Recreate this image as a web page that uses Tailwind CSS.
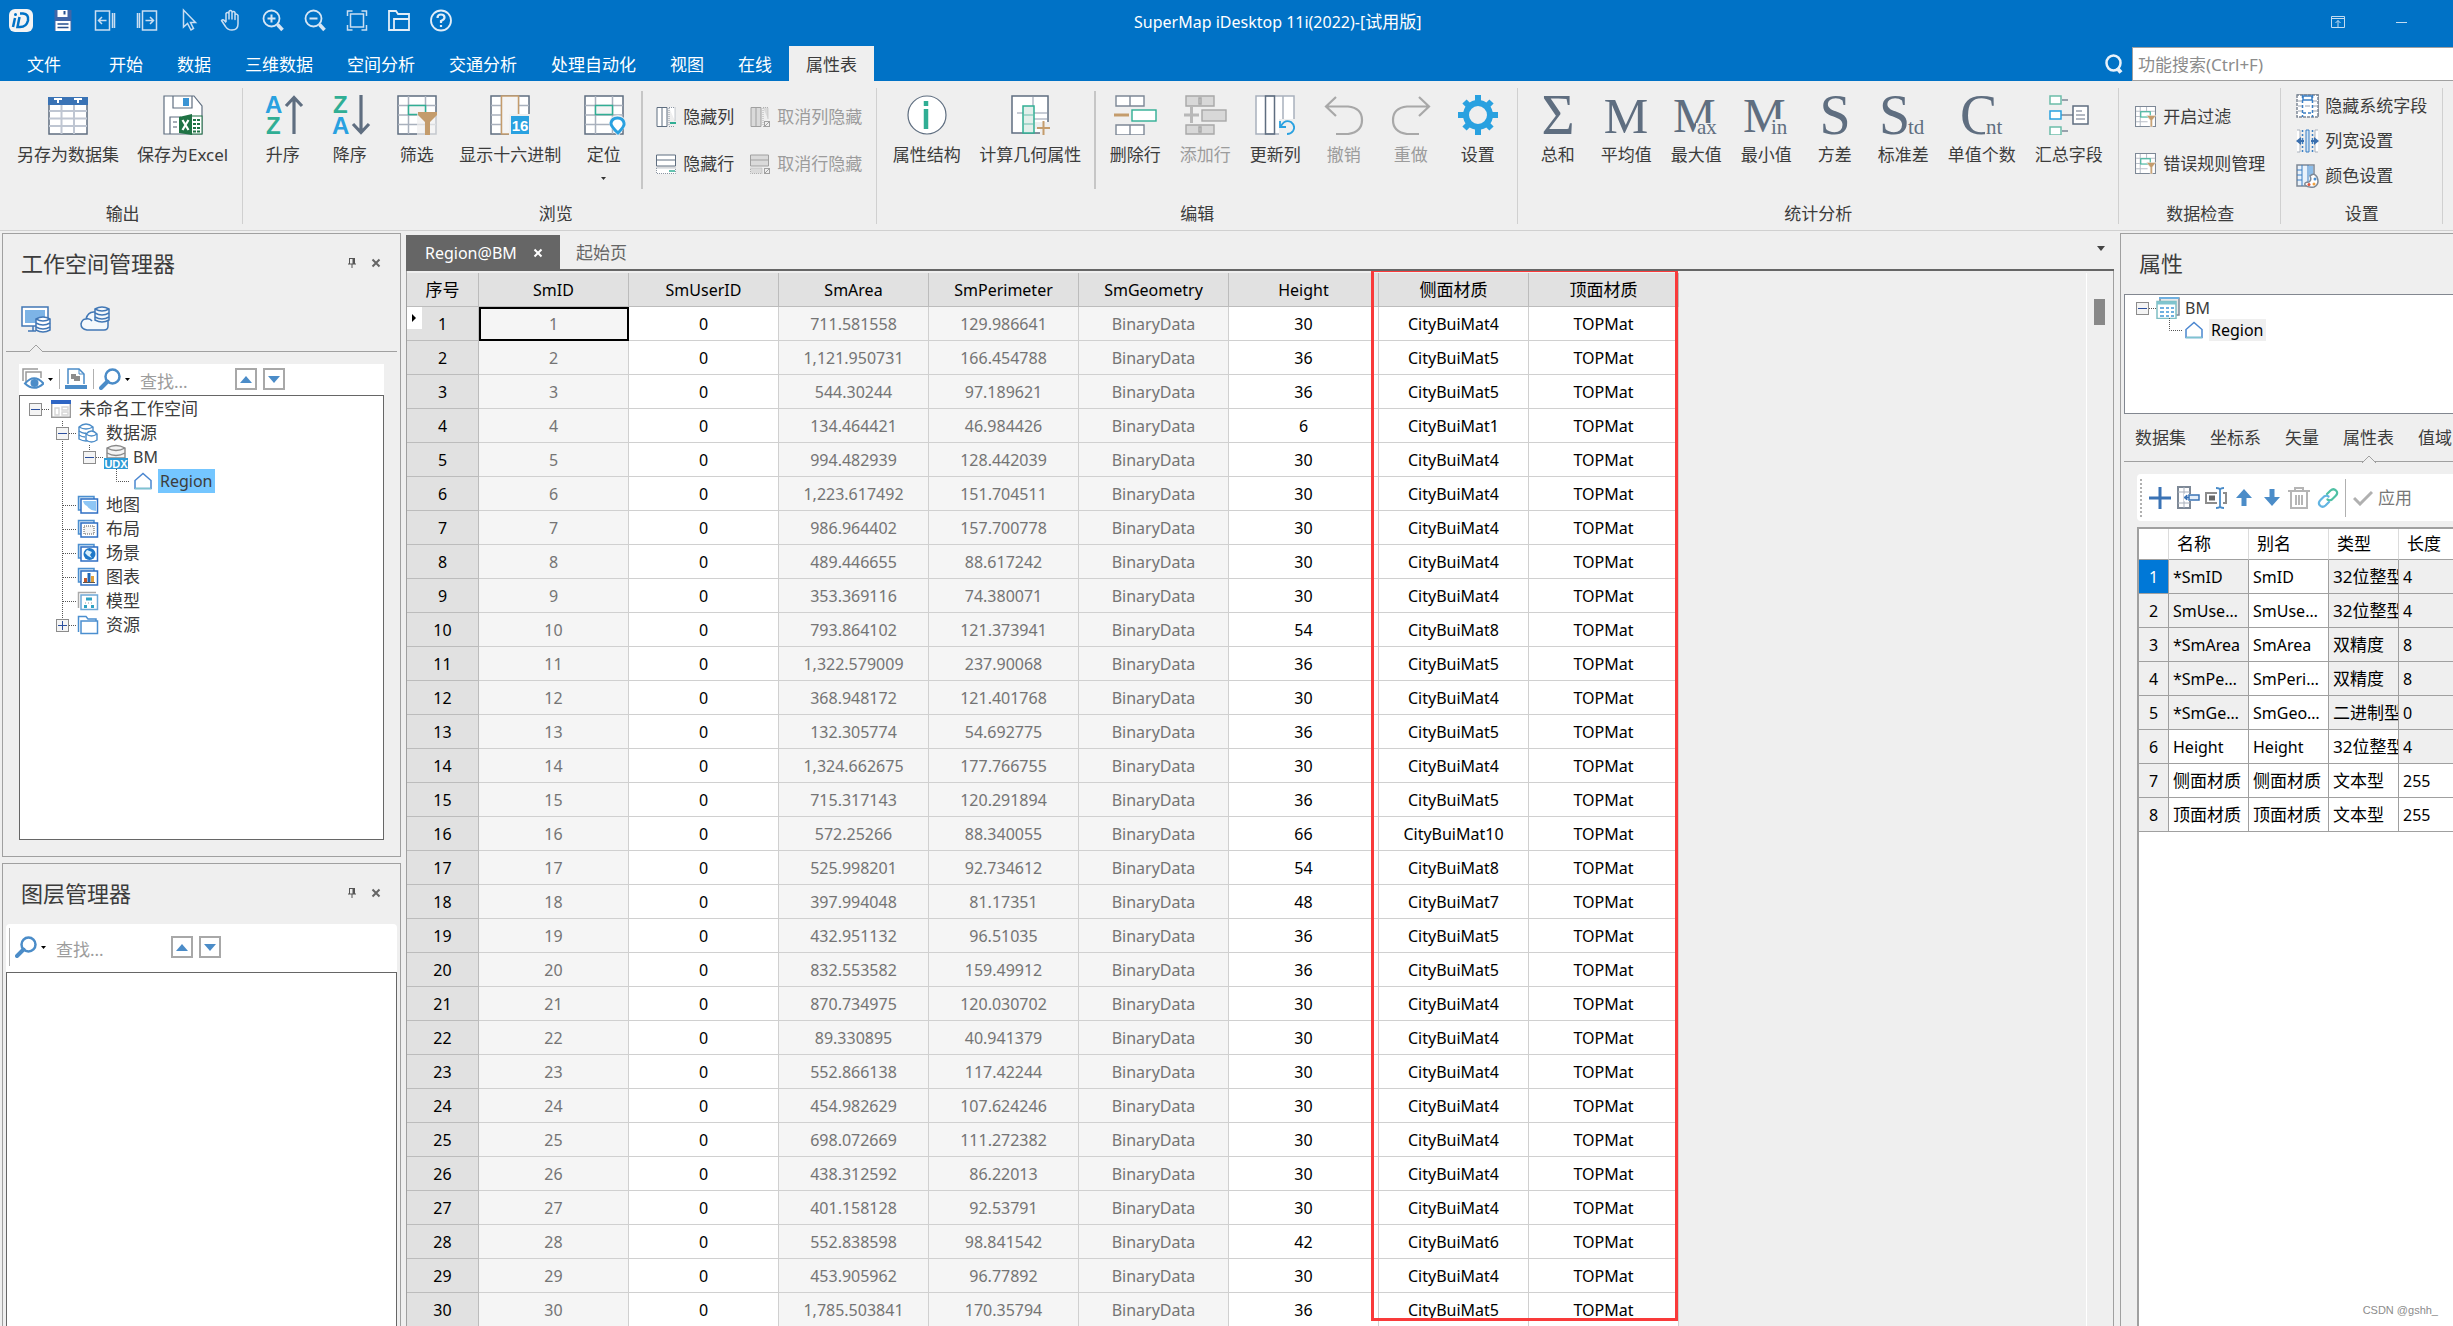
<!DOCTYPE html>
<html lang="zh-CN">
<head>
  <meta charset="UTF-8" />
  <meta name="viewport" content="width=device-width, initial-scale=1" />
  <title>SuperMap iDesktop 11i(2022)-[试用版]</title>
  <script src="https://cdn.jsdelivr.net/npm/@tailwindcss/browser@4"></script>
</head>
<body class="h-screen flex flex-col overflow-hidden bg-[#efefef] text-[17px] leading-5 text-[#3c3c3c] font-['Noto_Sans','Noto_Sans_CJK_SC',sans-serif]">

  <!-- Shared symbols -->
  <svg class="hidden">
    <symbol id="grid-base" viewBox="0 0 40 40">
      <rect x="1" y="1" width="38" height="38" fill="#fff" stroke="#5f6e80" stroke-width="1.5" />
      <path d="M11.500 1V39M28.500 1V39M1 10.500H39M1 20H39M1 29.500H39" stroke="#a9b1bd" stroke-width="1.500" fill="none" />
    </symbol>
    <symbol id="filter-grid" viewBox="0 0 20 20">
      <path d="M.5.500H19.500V19.500H.5z" fill="#fff" stroke="#7d8896" />
      <path d="M5 1V19M1 5H19M1 10H19M1 15H12M11 1V5" stroke="#b9bfc8" fill="none" />
      <rect x="5.500" y="5.500" width="9" height="5" fill="#fff" stroke="#30ae94" />
      <path d="M11 9H20L16.500 13.500V20H14.500V13.500z" fill="#c49c6c" stroke="#efefef" stroke-width=".5" />
    </symbol>
    <symbol id="t-minus" viewBox="0 0 27 24">
      <path d="M20 12.500H27" stroke="#555" stroke-dasharray="1 1" />
      <rect x="7.500" y="6.500" width="12" height="12" fill="#f4f4f4" stroke="#8c8c8c" />
      <path d="M9 12.500H18" stroke="#2b4f9e" />
    </symbol>
    <symbol id="t-minus-through" viewBox="0 0 27 24">
      <path d="M13.500 0V24" stroke="#555" stroke-dasharray="1 1" />
      <use href="#t-minus" width="27" height="24" />
    </symbol>
    <symbol id="t-minus-up" viewBox="0 0 27 24">
      <path d="M13.500 0V6" stroke="#555" stroke-dasharray="1 1" />
      <use href="#t-minus" width="27" height="24" />
    </symbol>
    <symbol id="t-plus-up" viewBox="0 0 27 24">
      <use href="#t-minus-up" width="27" height="24" />
      <path d="M13.500 8V17" stroke="#2b4f9e" />
    </symbol>
    <symbol id="t-line" viewBox="0 0 27 24">
      <path d="M13.500 0V24" stroke="#555" stroke-dasharray="1 1" />
    </symbol>
    <symbol id="t-tee" viewBox="0 0 27 24">
      <path d="M13.500 0V24M14 12.500H27" stroke="#555" stroke-dasharray="1 1" />
    </symbol>
    <symbol id="t-corner" viewBox="0 0 27 24">
      <path d="M13.500 0V12.500H27" stroke="#555" stroke-dasharray="1 1" fill="none" />
    </symbol>
    <symbol id="region" viewBox="0 0 18 18">
      <path d="M1 16.500V8.500L9 1.500L17 8.500V16.500z" fill="#fff" stroke="#4a86d0" stroke-width="1.500" />
      <path d="M1 16.500H17" stroke="#7fc4cf" stroke-width="1.500" />
    </symbol>
    <symbol id="stack" viewBox="0 0 22 20">
      <path d="M4 15H1.500V1.500H17V4" fill="#cfe3f5" stroke="#4b8fd0" stroke-width="1.500" />
      <rect x="4" y="4" width="16.500" height="14" fill="#fff" stroke="#2f6fc4" stroke-width="1.500" />
    </symbol>
    <symbol id="loupe" viewBox="0 0 22 22">
      <circle cx="13.500" cy="8.500" r="7" fill="none" stroke="#4b8cc8" stroke-width="2.500" />
      <path d="M8.500 13.500L2 20" stroke="#4b8cc8" stroke-width="4" stroke-linecap="round" />
    </symbol>
    <symbol id="pin" viewBox="0 0 8 10">
      <path d="M1.500.500V6M0 6H8M4 6V10M1 .500H6" stroke="#555" fill="none" />
      <path d="M4.500 0H7V6H4.500z" fill="#555" />
    </symbol>
    <symbol id="cross" viewBox="0 0 10 10">
      <path d="M1.500 1.500L8.500 8.500M8.500 1.500L1.500 8.500" stroke="currentColor" stroke-width="2" fill="none" />
    </symbol>
  </svg>

  <!-- Title bar and ribbon tabs -->
  <header class="shrink-0 bg-[#0072c6] text-white">
    <div class="h-[46px] relative flex items-start">
      <div class="flex items-center pl-2 pt-2 gap-4">
        <button class="w-[26px] h-[25px]" aria-label="iDesktop"><svg viewBox="0 0 26 25" class="w-full h-full" fill="none"><rect x="1" y="1" width="24" height="23" rx="6" fill="#f4f4f4" /><path d="M12 5.500H15Q21 6 20 12.500Q18.500 19 12 19H9.500L11.500 9" stroke="#0072c6" stroke-width="2.500" /><path d="M7 10L5 19" stroke="#0072c6" stroke-width="2.500" /><circle cx="7.500" cy="6.500" r="1.500" fill="#0072c6" /></svg></button>
        <button class="w-[26px] h-[25px]" aria-label="保存"><svg viewBox="0 0 25 25" class="w-full h-full"><path d="M4 2H21V23H4z" fill="#3f66a8" /><path d="M7 2H17V9H7zM5 13H20V23H5z" fill="#fff" /><path d="M13 3H15V6.500H13z" fill="#27508f" /><path d="M7 16H18M7 19.500H18" stroke="#27508f" stroke-width="1.500" /></svg></button>
        <button class="w-[26px] h-[25px]" aria-label="后退"><svg viewBox="0 0 25 25" class="w-full h-full" fill="none" stroke="#c9def2" stroke-width="1.500"><path d="M3 3H17V22H3zM20 5V20M22 5V20M14 12.500H6M9.500 9L6 12.500L9.500 16" /></svg></button>
        <button class="w-[26px] h-[25px]" aria-label="前进"><svg viewBox="0 0 25 25" class="w-full h-full" fill="none" stroke="#c9def2" stroke-width="1.500"><path d="M8 3H22V22H8zM5 5V20M3 5V20M11 12.500H19M15.500 9L19 12.500L15.500 16" /></svg></button>
        <button class="w-[26px] h-[25px]" aria-label="选择"><svg viewBox="0 0 25 25" class="w-full h-full" fill="none" stroke="#c9def2" stroke-width="1.500"><path d="M7 2V19L11 15.500L14.500 22L17 20.500L14 14.500H19z" /></svg></button>
        <button class="w-[26px] h-[25px]" aria-label="平移"><svg viewBox="0 0 26 25" class="w-full h-full" fill="none" stroke="#c9def2" stroke-width="1.500" stroke-linejoin="round"><path d="M8 14V5.500Q9.500 3.500 11 5.500V11V3.500Q12.500 1.500 14 3.500V11V4.500Q15.500 2.500 17 4.500V11.500V7Q18.500 5 20 7.500V16Q20 22 14 22Q9.500 22 7.500 18.500L3.500 12.500Q5.500 10.500 8 14.500" /></svg></button>
        <button class="w-[26px] h-[25px]" aria-label="放大"><svg viewBox="0 0 25 25" class="w-full h-full" fill="none" stroke="#d6e6f5"><circle cx="11" cy="10.500" r="8" stroke-width="1.800" /><path d="M7 10.500H15M11 6.500V14.500" stroke-width="2" /><path d="M17 16.500L22 22" stroke-width="3.500" /></svg></button>
        <button class="w-[26px] h-[25px]" aria-label="缩小"><svg viewBox="0 0 25 25" class="w-full h-full" fill="none" stroke="#d6e6f5"><circle cx="11" cy="10.500" r="8" stroke-width="1.800" /><path d="M7 10.500H15" stroke-width="2" /><path d="M17 16.500L22 22" stroke-width="3.500" /></svg></button>
        <button class="w-[26px] h-[25px]" aria-label="全幅显示"><svg viewBox="0 0 25 25" class="w-full h-full" fill="none" stroke="#c9def2" stroke-width="1.500"><path d="M6 6H19V19H6zM3 8V3H8M17 3H22V8M22 17V22H17M8 22H3V17" /></svg></button>
        <button class="w-[26px] h-[25px]" aria-label="打开"><svg viewBox="0 0 26 25" class="w-full h-full" fill="none" stroke="#e2eef8" stroke-width="1.800"><path d="M3 22V3H10L12 6H23V22zM8 22V11H23" /></svg></button>
        <button class="w-[26px] h-[25px]" aria-label="帮助"><svg viewBox="0 0 25 25" class="w-full h-full" fill="none" stroke="#e2eef8" stroke-width="1.800"><circle cx="12.500" cy="12.500" r="10" /><path d="M9 10Q9 6.500 12.500 6.500T16 9.500Q16 11.500 12.500 13V15M12.500 17V19" stroke-width="2.200" /></svg></button>
      </div>
      <h1 class="absolute left-[1134px] top-3 text-base leading-5 whitespace-nowrap">SuperMap iDesktop 11i(2022)-[<span class="text-[17px]">试用版</span>]</h1>
      <div class="ml-auto flex pr-[46px] pt-[15px] gap-[51px]">
        <button aria-label="功能区显示选项"><svg class="w-[14px] h-[14px]" viewBox="0 0 14 14" fill="none" stroke="#c3dcf1"><path d="M.5 1.500H13.500V12.500H.5zM.5 3.500H13.500M7 12V5.500M4.500 8L7 5.500L9.500 8" /></svg></button>
        <button aria-label="最小化"><svg class="w-[11px] h-[14px]" viewBox="0 0 11 14"><path d="M0 7.500H11" stroke="#c3dcf1" /></svg></button>
      </div>
    </div>
    <div class="h-[35px] flex items-stretch">
      <nav class="flex items-stretch">
        <button class="w-[88px] mr-1 pt-[2px]">文件</button>
        <button class="px-[17px] pt-[2px]">开始</button>
        <button class="px-[17px] pt-[2px]">数据</button>
        <button class="px-[17px] pt-[2px]">三维数据</button>
        <button class="px-[17px] pt-[2px]">空间分析</button>
        <button class="px-[17px] pt-[2px]">交通分析</button>
        <button class="px-[17px] pt-[2px]">处理自动化</button>
        <button class="px-[17px] pt-[2px]">视图</button>
        <button class="px-[17px] pt-[2px]">在线</button>
        <button class="px-[17px] pt-[2px] bg-[#efefef] text-[#3c3c3c]">属性表</button>
      </nav>
      <label for="fn-search" class="ml-auto flex items-center pr-[9px]" aria-label="功能搜索">
        <svg class="w-[18px] h-5" viewBox="0 0 18 20" fill="none" stroke="#e9f2fa"><ellipse cx="8.500" cy="9" rx="7" ry="7.500" stroke-width="2.500" /><path d="M12 14L16 18.500" stroke-width="4" /></svg>
      </label>
      <input id="fn-search" type="text" placeholder="功能搜索(Ctrl+F)" class="w-[321px] h-[34px] mt-px pl-[5px] bg-white border border-r-0 border-[#a0a0a0] text-[#3c3c3c] placeholder:text-[#8c8c8c] outline-none" />
    </div>
  </header>

  <!-- Ribbon -->
  <section class="shrink-0 h-[150px] flex pt-[7px] pb-[6px] border-b border-[#d0d0d0] overflow-hidden whitespace-nowrap">
    <div class="flex flex-col shrink-0 pl-2 pr-[5px] border-r border-[#d0d0d0]">
      <div class="flex items-start">
        <button class="min-w-[67px] px-[9px] pt-[7px] flex flex-col items-center gap-[10px]"><svg class="w-10 h-10" viewBox="0 0 40 40"><rect x="1" y="3" width="38" height="36" fill="#fff" stroke="#5f6e80" stroke-width="1.500" /><path d="M13.500 9V39M26 9V39M1 16H39M1 23.500H39M1 31H39" stroke="#bfc6d2" stroke-width="2" /><path d="M0 2H40V10H0z" fill="#3a73b5" /><path d="M6 4H14M10 4V8M26 4H34M30 4V8" stroke="#fff" stroke-width="2" /></svg>另存为数据集</button>
        <button class="min-w-[67px] px-[9px] pt-[7px] flex flex-col items-center gap-[10px]"><svg class="w-10 h-10" viewBox="0 0 40 40"><path d="M1 1H31L39 11V39H1z" fill="#fff" stroke="#5f6e80" stroke-width="1.200" /><path d="M10 1V13H29V1M7 39V22H18" stroke="#5f6e80" stroke-width="1.200" fill="none" /><path d="M20 3H26V11H20z" fill="#3a94d4" /><path d="M10 27H14M10 32H14" stroke="#8a93a0" stroke-width="1.500" /><rect x="28" y="21" width="11" height="18" fill="#fff" stroke="#1f7244" /><path d="M30 25H37M30 29H37M30 33H37M30 36.500H37" stroke="#1f7244" stroke-width="2" stroke-dasharray="3 1" /><path d="M16 22L29 19V40L16 38z" fill="#1f7244" /><path d="M19.500 25L25.500 35M25.500 25L19.500 35" stroke="#fff" stroke-width="2.200" /></svg>保存为Excel</button>
      </div>
      <div class="mt-auto text-center">输出</div>
    </div>

    <div class="flex flex-col shrink-0 pl-[6px] pr-[14px] border-r border-[#d0d0d0]">
      <div class="flex items-start">
        <button class="min-w-[67px] px-[9px] pt-[7px] flex flex-col items-center gap-[10px]"><svg class="w-10 h-10 overflow-visible" viewBox="0 0 40 40" font-family="Liberation Sans" font-size="24" font-weight="bold"><text x="2" y="18" fill="#29a1e0">A</text><text x="3" y="39" fill="#30ae94">Z</text><path d="M31 39V3M23 11L31 2.500L39 11" stroke="#5f6e80" stroke-width="3.200" fill="none" /></svg>升序</button>
        <button class="min-w-[67px] px-[9px] pt-[7px] flex flex-col items-center gap-[10px]"><svg class="w-10 h-10 overflow-visible" viewBox="0 0 40 40" font-family="Liberation Sans" font-size="24" font-weight="bold"><text x="3" y="18" fill="#30ae94">Z</text><text x="2" y="39" fill="#29a1e0">A</text><path d="M31 0V37M23 29L31 37.500L39 29" stroke="#5f6e80" stroke-width="3.200" fill="none" /></svg>降序</button>
        <button class="min-w-[67px] px-[9px] pt-[7px] flex flex-col items-center gap-[10px]"><svg class="w-10 h-10" viewBox="0 0 40 40"><use href="#grid-base" /><rect x="11.500" y="10.500" width="17" height="9" fill="#f4f4f4" stroke="#30ae94" stroke-width="1.500" /><path d="M20 17H40V40H20z" fill="#efefef" opacity=".7" /><path d="M21 17H40V20L33 27V40H28V27L21 20z" fill="#c49c6c" /></svg>筛选</button>
        <button class="min-w-[67px] px-[9px] pt-[7px] flex flex-col items-center gap-[10px]"><svg class="w-10 h-10 overflow-visible" viewBox="0 0 40 40"><use href="#grid-base" /><rect x="11.500" y="1" width="17" height="38" fill="#f4f4f4" stroke="#c49c6c" stroke-width="1.500" /><path d="M19 19H40V40H19z" fill="#efefef" /><path d="M21 21H39V39H21z" fill="#29a1e0" /><text x="30" y="36" font-family="Liberation Sans" font-size="15" font-weight="bold" text-anchor="middle" fill="#fff">16</text></svg>显示十六进制</button>
        <button class="min-w-[67px] px-[9px] pt-[7px] flex flex-col items-center gap-[10px]"><svg class="w-10 h-10 overflow-visible" viewBox="0 0 40 40"><use href="#grid-base" /><rect x="11.500" y="10.500" width="17" height="9" fill="#f4f4f4" stroke="#30ae94" stroke-width="1.500" /><path d="M34 42L26 31Q23 21 34 20Q43 21 41.500 31z" fill="#efefef" /><path d="M34 38Q26.500 31 27 28Q28 23 33.500 23T40 28Q41 31 34 38z" fill="#fff" stroke="#29a1e0" stroke-width="3" /></svg>定位<svg class="w-[5px] h-[3px] mt-[2px]" viewBox="0 0 5 3"><path d="M0 0H5L2.500 3z" fill="#333" /></svg></button>
        <div class="w-[2px] h-[98px] mt-[3px] ml-1 bg-[#c6c6c6]"></div>
        <div class="grid grid-cols-[auto_auto] gap-x-4 mt-[5px] ml-[13px]">
          <button class="h-[47px] flex items-center gap-[7px]"><svg class="w-5 h-5" viewBox="0 0 20 20" fill="none"><path d="M1 .500H11V19.500H1z" fill="#fff" stroke="#5f6e80" /><path d="M6 0V20" stroke="#5f6e80" /><path d="M13 .500H19V14M13 19.500H18M13 1V19" fill="#fff" stroke="#8c96a3" stroke-dasharray="1 1" /><path d="M14 16H20" stroke="#30ae94" stroke-width="2" /></svg>隐藏列</button>
          <button class="h-[47px] flex items-center gap-[7px] text-[#9c9c9c]" disabled><svg class="w-5 h-5" viewBox="0 0 20 20" fill="none"><path d="M1 .500H11V19.500H1z" fill="#dadada" stroke="#a0a0a0" /><path d="M6 0V20" stroke="#a0a0a0" /><path d="M13 .500H18V12M13 19.500H14M13 1V19" fill="#dadada" stroke="#b0b0b0" stroke-dasharray="1 1" /><rect x="14.500" y="14.500" width="5" height="5" stroke="#a0a0a0" /><path d="M15 19L19 15" stroke="#a0a0a0" /></svg>取消列隐藏</button>
          <button class="h-[47px] flex items-center gap-[7px]"><svg class="w-5 h-5" viewBox="0 0 20 20" fill="none"><path d="M.5 1H19.500V12H.5z" fill="#fff" stroke="#5f6e80" /><path d="M0 6H20" stroke="#5f6e80" /><path d="M.5 14H19.500V19.500H.5z" fill="#fff" stroke="#8c96a3" stroke-dasharray="1 1" /><path d="M13 17H19" stroke="#30ae94" stroke-width="1.500" /></svg>隐藏行</button>
          <button class="h-[47px] flex items-center gap-[7px] text-[#9c9c9c]" disabled><svg class="w-5 h-5" viewBox="0 0 20 20" fill="none"><path d="M.5 1H18.500V12H.5z" fill="#dadada" stroke="#a0a0a0" /><path d="M0 6H19" stroke="#a0a0a0" /><path d="M.5 14H12V19.500H.5z" fill="#dadada" stroke="#b0b0b0" stroke-dasharray="1 1" /><rect x="14.500" y="14.500" width="5" height="5" stroke="#a0a0a0" /><path d="M15 19L19 15" stroke="#a0a0a0" /></svg>取消行隐藏</button>
        </div>
      </div>
      <div class="mt-auto text-center">浏览</div>
    </div>

    <div class="flex flex-col shrink-0 px-[6px] border-r border-[#d0d0d0]">
      <div class="flex items-start">
        <button class="min-w-[87px] px-[9px] pt-[7px] flex flex-col items-center gap-[10px]"><svg class="w-10 h-10" viewBox="0 0 40 40"><circle cx="20" cy="20" r="19" fill="#fff" stroke="#5f6e80" stroke-width="1.200" /><path d="M19 6V11M19 14V34" stroke="#30ae94" stroke-width="4.500" /></svg>属性结构</button>
        <button class="min-w-[67px] px-[9px] pt-[7px] flex flex-col items-center gap-[10px]"><svg class="w-10 h-10" viewBox="0 0 40 40" fill="none"><rect x="2" y="1" width="36" height="37" fill="#fff" stroke="#5f6e80" stroke-width="1.500" /><path d="M23 2V24M7 18H37M24 24H37" stroke="#b5bcc8" stroke-width="1.500" /><rect x="13" y="11" width="11" height="27" fill="#e3efeb" stroke="#30ae94" stroke-width="1.500" /><path d="M14 20H23M14 29H23" stroke="#30ae94" stroke-width=".7" /><path d="M25 27H40V40H30V34H25z" fill="#efefef" /><path d="M27 33H40M33.500 26V40" stroke="#c49c6c" stroke-width="2" /></svg>计算几何属性</button>
        <div class="w-[2px] h-[98px] mt-[3px] mx-1 bg-[#c6c6c6]"></div>
        <button class="min-w-[70px] px-[9px] pt-[7px] flex flex-col items-center gap-[10px]"><svg class="w-11 h-10" viewBox="0 0 44 40" fill="#fff" stroke="#7d8896" stroke-width="1.400"><path d="M3 1H31V11H3zM17 1V11M3 30H31V40H3zM17 30V40" /><rect x="19" y="15" width="24" height="11" stroke="#30ae94" /><path d="M1 20H16" stroke="#c49c6c" stroke-width="3" /></svg>删除行</button>
        <button class="min-w-[70px] px-[9px] pt-[7px] flex flex-col items-center gap-[10px] text-[#9c9c9c]" disabled><svg class="w-11 h-10" viewBox="0 0 44 40" fill="#d8d8d8" stroke="#a8a8a8" stroke-width="1.400"><path d="M3 1H31V11H3zM16 3H18V9H16zM3 30H31V39H3zM16 32H18V37H16z" /><rect x="19" y="15" width="24" height="11" /><path d="M1 20H16M8.500 12V28" stroke="#b8b8b8" stroke-width="3" /></svg>添加行</button>
        <button class="min-w-[70px] px-[9px] pt-[7px] flex flex-col items-center gap-[10px]"><svg class="w-10 h-10" viewBox="0 0 40 40" fill="none"><path d="M1 1H39V39H1z" fill="#fff" stroke="#a9b1bd" stroke-width="1.500" /><path d="M28 1V39" stroke="#a9b1bd" stroke-width="1.500" /><path d="M10.500 1H19.500V39H10.500z" stroke="#5f6e80" stroke-width="1.500" /><path d="M24 24H40V40H24z" fill="#efefef" /><path d="M25 26V32H31M26 31Q30 24 36 27Q41 31 38 36Q36 39 32 39" stroke="#29a1e0" stroke-width="1.800" /></svg>更新列</button>
        <button class="min-w-[67px] px-[9px] pt-[7px] flex flex-col items-center gap-[10px] text-[#9c9c9c]" disabled><svg class="w-10 h-10" viewBox="0 0 40 40" fill="none" stroke="#a8a8a8" stroke-width="2.200"><path d="M12 2L2 11.500L12 21M2 11.500H24Q38 13 38 25T24 39H12" /></svg>撤销</button>
        <button class="min-w-[67px] px-[9px] pt-[7px] flex flex-col items-center gap-[10px] text-[#9c9c9c]" disabled><svg class="w-10 h-10" viewBox="0 0 40 40" fill="none" stroke="#a8a8a8" stroke-width="2.200"><path d="M28 2L38 11.500L28 21M38 11.500H16Q2 13 2 25T16 39H28" /></svg>重做</button>
        <button class="min-w-[67px] px-[9px] pt-[7px] flex flex-col items-center gap-[10px]"><svg class="w-10 h-10" viewBox="0 0 40 40" fill="none" stroke="#29a1e0"><circle cx="20" cy="20" r="12" stroke-width="6" /><path d="M20 0V7M20 33V40M0 20H7M33 20H40M6.500 6.500L11 11M29 29L33.500 33.500M33.500 6.500L29 11M11 29L6.500 33.500" stroke-width="6" /></svg>设置</button>
      </div>
      <div class="mt-auto text-center">编辑</div>
    </div>

    <div class="flex flex-col shrink-0 px-[6px] border-r border-[#d0d0d0]">
      <div class="flex items-start">
        <button class="min-w-[67px] px-[9px] pt-[7px] flex flex-col items-center gap-[10px]"><svg class="w-10 h-10 overflow-visible" viewBox="0 0 40 40" font-family="Liberation Serif" fill="#5f6e80"><text x="20" y="39" font-size="57" text-anchor="middle">Σ</text></svg>总和</button>
        <button class="min-w-[70px] px-[9px] pt-[7px] flex flex-col items-center gap-[10px]"><svg class="w-10 h-10 overflow-visible" viewBox="0 0 40 40" font-family="Liberation Serif" fill="#5f6e80"><text x="20" y="38" font-size="50" text-anchor="middle">M</text></svg>平均值</button>
        <button class="min-w-[70px] px-[9px] pt-[7px] flex flex-col items-center gap-[10px]"><svg class="w-10 h-10 overflow-visible" viewBox="0 0 40 40" font-family="Liberation Serif" fill="#5f6e80"><text x="-3" y="37" font-size="48">M</text><path d="M20 28H42V40H20z" fill="#efefef" /><text x="21" y="39" font-size="21">ax</text></svg>最大值</button>
        <button class="min-w-[70px] px-[9px] pt-[7px] flex flex-col items-center gap-[10px]"><svg class="w-10 h-10 overflow-visible" viewBox="0 0 40 40" font-family="Liberation Serif" fill="#5f6e80"><text x="-3" y="37" font-size="48">M</text><path d="M24 24H42V40H24z" fill="#efefef" /><text x="25" y="39" font-size="21">in</text></svg>最小值</button>
        <button class="min-w-[67px] px-[9px] pt-[7px] flex flex-col items-center gap-[10px]"><svg class="w-10 h-10 overflow-visible" viewBox="0 0 40 40" font-family="Liberation Serif" fill="#5f6e80"><text x="20" y="39" font-size="56" text-anchor="middle">S</text></svg>方差</button>
        <button class="min-w-[70px] px-[9px] pt-[7px] flex flex-col items-center gap-[10px]"><svg class="w-10 h-10 overflow-visible" viewBox="0 0 40 40" font-family="Liberation Serif" fill="#5f6e80"><text x="-4" y="39" font-size="56">S</text><text x="25" y="39" font-size="21">td</text></svg>标准差</button>
        <button class="min-w-[87px] px-[9px] pt-[7px] flex flex-col items-center gap-[10px]"><svg class="w-10 h-10 overflow-visible" viewBox="0 0 40 40" font-family="Liberation Serif" fill="#5f6e80"><text x="-2" y="39" font-size="56">C</text><path d="M23 25H37V41H23z" fill="#efefef" /><text x="24" y="39" font-size="21">nt</text></svg>单值个数</button>
        <button class="min-w-[87px] px-[9px] pt-[7px] flex flex-col items-center gap-[10px]"><svg class="w-10 h-10" viewBox="0 0 40 40" fill="#fff" stroke-width="1.500"><path d="M13 5H19M13 36H19M12 20H24M19 5" stroke="#7d8896" /><path d="M1 1H12V9H1zM1 32H12V40H1z" stroke="#6cbda9" /><path d="M1 16H12V24H1z" stroke="#29a1e0" /><rect x="24" y="11" width="15" height="18" stroke="#5f6e80" /><path d="M27 16H33M27 20H36M27 24H36" stroke="#9aa3b0" /></svg>汇总字段</button>
      </div>
      <div class="mt-auto text-center">统计分析</div>
    </div>

    <div class="flex flex-col shrink-0 pl-4 pr-[15px] border-r border-[#d0d0d0]">
      <div class="flex flex-col items-start mt-[5px]">
        <button class="h-[47px] flex items-center gap-[7px]"><svg class="w-[21px] h-[21px]"><use href="#filter-grid" /></svg>开启过滤</button>
        <button class="h-[47px] flex items-center gap-[7px]"><svg class="w-[21px] h-[21px]"><use href="#filter-grid" /></svg>错误规则管理</button>
      </div>
      <div class="mt-auto text-center">数据检查</div>
    </div>

    <div class="flex flex-col shrink-0 px-[15px] border-r border-[#d0d0d0]">
      <div class="flex flex-col items-start">
        <button class="h-[35px] flex items-center gap-[6px]"><svg class="w-[23px] h-6" viewBox="0 0 23 24" fill="none"><path d="M1 1H22V23" fill="#fff" stroke="#7d8896" stroke-width="1.500" /><path d="M1 1V23H22V1z" fill="#fff" stroke="#7d8896" stroke-width="1.500" stroke-dasharray="3 1" /><path d="M6.500 1V23M16.500 1V23M7 19H16" stroke="#3b7fc4" stroke-width="1.500" stroke-dasharray="3 2" /><path d="M7 2H16V6H7z" stroke="#3b7fc4" stroke-width="1.500" /><path d="M2 7H6M2 12H6M2 17H6M17 7H21M17 12H21M17 17H21M9 12H14" stroke="#9aa3b0" /></svg>隐藏系统字段</button>
        <button class="h-[35px] flex items-center gap-[6px]"><svg class="w-[23px] h-6" viewBox="0 0 23 24" fill="none"><path d="M1 1H4V23H1M22 1H19V23H22" fill="#fff" stroke="#a9b1bd" /><path d="M6.500 1V23M16.500 1V23" stroke="#3b7fc4" stroke-width="1.500" stroke-dasharray="2 2" /><path d="M10 1H13V23H10z" stroke="#3b7fc4" fill="#cfe3f5" /><path d="M0 12L5 8V11H8V13H5V16zM23 12L18 8V11H15V13H18V16z" fill="#3b6fae" /></svg>列宽设置</button>
        <button class="h-[35px] flex items-center gap-[6px]"><svg class="w-[23px] h-6" viewBox="0 0 23 24" fill="none"><path d="M1 1H18V22H1z" fill="#e9f2fb" stroke="#7d8896" stroke-width="1.500" /><path d="M6 1V22M12 1V22M1 6H6M1 11H6M1 16H6" stroke="#3b7fc4" /><path d="M13 2H17V12H13z" fill="#8bbdea" /><path d="M14 12Q18 8 21 13Q24 20 18 23Q12 24 9 21Q8 18 13 18Q16 16 14 12z" fill="#fff" stroke="#7d8896" stroke-width="1.500" /><circle cx="13" cy="20.500" r="1.500" fill="#e2553c" /><circle cx="18" cy="20" r="1.500" fill="#f0a040" /><circle cx="19" cy="15" r="1.500" fill="#4b8fd0" /></svg>颜色设置</button>
      </div>
      <div class="mt-auto text-center">设置</div>
    </div>
  </section>

  <!-- Work area -->
  <main class="flex-1 min-h-0 flex pt-[2px]">

    <!-- Left docks -->
    <aside class="w-[399px] ml-[2px] shrink-0 flex flex-col gap-[6px]">
      <section class="h-[624px] shrink-0 border border-[#a0a0a0] flex flex-col px-[3px]">
        <div class="h-[60px] flex items-center pl-[15px] pr-4 pb-[2px]">
          <h2 class="text-[22px] leading-7">工作空间管理器</h2>
          <button class="ml-auto" aria-label="固定"><svg class="w-2 h-[10px]"><use href="#pin" /></svg></button>
          <button class="ml-[15px]" aria-label="关闭"><svg class="w-[10px] h-[10px] text-[#666]"><use href="#cross" /></svg></button>
        </div>
        <div class="h-[58px] border-b border-[#a0a0a0] flex items-start pl-[15px] pt-3 gap-[29px] relative">
          <button aria-label="本地"><svg class="w-[30px] h-[28px]" viewBox="0 0 30 28" fill="#fff" stroke="#4177b5" stroke-width="1.500"><path d="M1 1H27V20H1z" /><path d="M4 4H24V17H4z" fill="#7db4e6" stroke="none" /><path d="M7 25H15M12 20V25" /><path d="M15 13Q22 9 29 13V24Q22 28 15 24z" /><path d="M15 13Q22 17 29 13M15 17Q22 21 29 17M15 21Q22 25 29 21" fill="none" /></svg></button>
          <button aria-label="在线"><svg class="w-[30px] h-[28px]" viewBox="0 0 30 28" fill="#f4f8fc" stroke="#4177b5" stroke-width="1.500"><path d="M7 24Q1 23 1 18Q2 13 6 13Q8 5 15 6L28 14V20Q28 24 24 24zM6 13Q10 12 12 15" /><path d="M15 3Q22-1 29 3V14Q22 18 15 14z" /><path d="M15 3Q22 7 29 3M15 7Q22 11 29 7M15 11Q22 15 29 11" fill="none" /></svg></button>
          <svg class="absolute left-[23px] -bottom-px w-[14px] h-2" viewBox="0 0 14 8"><path d="M0 8L7 1L14 8" fill="#efefef" stroke="#a0a0a0" /></svg>
        </div>
        <div class="mt-3 mx-[13px] h-[31px] bg-white flex items-center pl-[3px] pb-px">
          <button class="flex items-center gap-1" aria-label="显示"><svg class="w-[22px] h-[22px]" viewBox="0 0 22 22" fill="none"><path d="M1 13V1H16M4 16V4H19V10" stroke="#9a9a9a" stroke-width="1.500" /><path d="M3 15.500Q12 5 21.500 15.500Q12 24 3 15.500z" fill="#fff" stroke="#4b8cc8" stroke-width="2" /><circle cx="12.500" cy="15" r="4" fill="#4b8cc8" /></svg><svg class="w-[5px] h-[3px]" viewBox="0 0 5 3"><path d="M0 0H5L2.500 3z" /></svg></button>
          <span class="w-px h-5 bg-[#b0b0b0] ml-[6px]"></span>
          <button class="ml-[5px]" aria-label="定位"><svg class="w-[22px] h-[22px]" viewBox="0 0 22 22" fill="none"><path d="M3 16V1H14L19 6V16" stroke="#4b8cc8" stroke-width="1.500" /><path d="M14 1V6H19" stroke="#4b8cc8" /><path d="M6 6H11V8H15V13H9V11H6z" fill="#8c8c8c" /><path d="M0 17H22V21H0z" fill="#4b8cc8" /></svg></button>
          <span class="w-px h-5 bg-[#b0b0b0] ml-[6px]"></span>
          <button class="ml-[5px] flex items-center gap-1" aria-label="查找"><svg class="w-[22px] h-[22px]"><use href="#loupe" /></svg><svg class="w-[5px] h-[3px]" viewBox="0 0 5 3"><path d="M0 0H5L2.500 3z" /></svg></button>
          <input type="text" placeholder="查找..." aria-label="查找" class="w-[95px] ml-[10px] pt-[6px] placeholder:text-[#9c9c9c] outline-none" />
          <button class="w-[22px] h-[22px] border-2 border-[#a8a8a8] flex items-center justify-center" aria-label="上一个"><svg class="w-3 h-[7px]" viewBox="0 0 12 7"><path d="M0 7L6 0L12 7z" fill="#4b8cc8" /></svg></button>
          <button class="w-[22px] h-[22px] ml-[6px] border-2 border-[#a8a8a8] flex items-center justify-center" aria-label="下一个"><svg class="w-3 h-[7px]" viewBox="0 0 12 7"><path d="M0 0L6 7L12 0z" fill="#4b8cc8" /></svg></button>
        </div>
        <ul class="mx-[13px] h-[445px] bg-white border border-[#666] pt-px pl-[2px]">
          <li class="h-6 flex items-center"><svg class="w-[27px] h-6"><use href="#t-minus" /></svg><svg class="w-5 h-[18px] mx-[2px]" viewBox="0 0 20 18"><path d="M.7.700H19.300V17.300H.7z" fill="#fff" stroke="#9a9a9a" stroke-width="1.400" /><path d="M0 0H20V4H0z" fill="#2f66c4" /><path d="M4 8H8V15H4zM11 7H17V10H11zM11 12H17V15H11z" fill="none" stroke="#d5d5d5" stroke-width="1.400" /></svg><span class="pl-[6px]">未命名工作空间</span></li>
          <li class="h-6 flex items-center"><span class="w-[27px]"></span><svg class="w-[27px] h-6"><use href="#t-minus-through" /></svg><svg class="w-5 h-5 mx-[2px]" viewBox="0 0 20 20" fill="#fff" stroke="#4b8cc8" stroke-width="1.400"><path d="M1 4Q8-2 15 4V16Q8 20 1 16z" /><path d="M1 4Q8 8 15 4M1 8Q5 11 8 10M1 12Q4 14 7 14" fill="none" /><path d="M8 11Q13.500 5 19 11V17Q13.500 21 8 17z" /><path d="M8 11Q13.500 15 19 11" /></svg><span class="pl-[6px]">数据源</span></li>
          <li class="h-6 flex items-center"><span class="w-[27px]"></span><svg class="w-[27px] h-6"><use href="#t-line" /></svg><svg class="w-[27px] h-6"><use href="#t-minus-up" /></svg><svg class="w-6 h-6 ml-px overflow-visible" viewBox="0 0 24 24"><path d="M3 3Q12-2 21 3V13H3z" fill="#f4f4f4" stroke="#888" stroke-width="1.400" /><path d="M3 3Q12 8 21 3M3 8Q12 13 21 8" fill="none" stroke="#888" stroke-width="1.400" /><path d="M0 13H24V24H0z" fill="#2f9bd6" /><text x="12" y="22.500" font-family="Liberation Sans" font-size="11" font-weight="bold" text-anchor="middle" fill="#fff">UDX</text></svg><span class="pl-[5px] text-base">BM</span></li>
          <li class="h-6 flex items-center"><span class="w-[27px]"></span><svg class="w-[27px] h-6"><use href="#t-line" /></svg><span class="w-[27px]"></span><svg class="w-[27px] h-6"><use href="#t-corner" /></svg><svg class="w-[18px] h-[18px] ml-1"><use href="#region" /></svg><span class="ml-[6px] px-[2px] h-6 leading-6 bg-[#74c6ff] text-base">Region</span></li>
          <li class="h-6 flex items-center"><span class="w-[27px]"></span><svg class="w-[27px] h-6"><use href="#t-tee" /></svg><svg class="w-[22px] h-5 ml-px" viewBox="0 0 22 20"><use href="#stack" /><path d="M6 6H19V16Q12 15 10 11Q7 10 6 6z" fill="#8ec6f5" /></svg><span class="pl-[7px]">地图</span></li>
          <li class="h-6 flex items-center"><span class="w-[27px]"></span><svg class="w-[27px] h-6"><use href="#t-tee" /></svg><svg class="w-[22px] h-5 ml-px" viewBox="0 0 22 20"><use href="#stack" /><path d="M7 7H17V15H7z" fill="#f4f4f4" stroke="#555" stroke-dasharray="1 1" /></svg><span class="pl-[7px]">布局</span></li>
          <li class="h-6 flex items-center"><span class="w-[27px]"></span><svg class="w-[27px] h-6"><use href="#t-tee" /></svg><svg class="w-[22px] h-5 ml-px" viewBox="0 0 22 20"><use href="#stack" /><circle cx="12.500" cy="11" r="6" fill="#1f78c8" /><path d="M10 7L15 9L13 12L15 15L11 13L8 10z" fill="#d8eefa" /></svg><span class="pl-[7px]">场景</span></li>
          <li class="h-6 flex items-center"><span class="w-[27px]"></span><svg class="w-[27px] h-6"><use href="#t-tee" /></svg><svg class="w-[22px] h-5 ml-px" viewBox="0 0 22 20"><use href="#stack" /><path d="M7 11H10V15H7z" fill="#c0562c" /><path d="M10.500 6H13.500V15H10.500z" fill="#1f66b8" /><path d="M14 9H17V15H14z" fill="#e0a03c" /><path d="M6 15.500H18" stroke="#555" /></svg><span class="pl-[7px]">图表</span></li>
          <li class="h-6 flex items-center"><span class="w-[27px]"></span><svg class="w-[27px] h-6"><use href="#t-tee" /></svg><svg class="w-[22px] h-5 ml-px" viewBox="0 0 22 20"><path d="M1.500 17V1.500H19" fill="none" stroke="#aaa" stroke-width="1.500" /><rect x="4" y="4" width="16.500" height="14.500" fill="#fff" stroke="#6fa8d6" stroke-width="1.500" /><path d="M9 6.500H15V9.500H9zM7 14H10V17H7zM14 14H17V17H14z" fill="#2fa3c4" /><path d="M8 12H17" stroke="#999" stroke-dasharray="1 2" /></svg><span class="pl-[7px]">模型</span></li>
          <li class="h-6 flex items-center"><span class="w-[27px]"></span><svg class="w-[27px] h-6"><use href="#t-plus-up" /></svg><svg class="w-[22px] h-5 ml-px" viewBox="0 0 22 20"><path d="M1.500 17V1.500H9L11 4H19V6" fill="#fff" stroke="#4b8fd0" stroke-width="1.500" /><rect x="4" y="6" width="16.500" height="12.500" fill="#fff" stroke="#4b8fd0" stroke-width="1.500" /></svg><span class="pl-[7px]">资源</span></li>
        </ul>
      </section>

      <section class="flex-1 border border-b-0 border-[#a0a0a0] flex flex-col px-[3px]">
        <div class="h-[60px] flex items-center pl-[15px] pr-4 pb-[2px]">
          <h2 class="text-[22px] leading-7">图层管理器</h2>
          <button class="ml-auto" aria-label="固定"><svg class="w-2 h-[10px]"><use href="#pin" /></svg></button>
          <button class="ml-[15px]" aria-label="关闭"><svg class="w-[10px] h-[10px] text-[#666]"><use href="#cross" /></svg></button>
        </div>
        <div class="h-12 bg-white rounded-t flex items-center pl-[3px] pb-[2px]">
          <span class="w-px h-[38px] bg-[#b0b0b0]"></span>
          <button class="ml-[5px] flex items-center gap-1" aria-label="查找图层"><svg class="w-[22px] h-[22px]"><use href="#loupe" /></svg><svg class="w-[5px] h-[3px]" viewBox="0 0 5 3"><path d="M0 0H5L2.500 3z" /></svg></button>
          <input type="text" placeholder="查找..." aria-label="查找图层" class="w-[115px] ml-[10px] pt-[6px] placeholder:text-[#9c9c9c] outline-none" />
          <button class="w-[22px] h-[22px] border-2 border-[#a8a8a8] flex items-center justify-center" aria-label="上一个"><svg class="w-3 h-[7px]" viewBox="0 0 12 7"><path d="M0 7L6 0L12 7z" fill="#4b8cc8" /></svg></button>
          <button class="w-[22px] h-[22px] ml-[6px] border-2 border-[#a8a8a8] flex items-center justify-center" aria-label="下一个"><svg class="w-3 h-[7px]" viewBox="0 0 12 7"><path d="M0 0L6 7L12 0z" fill="#4b8cc8" /></svg></button>
        </div>
        <div class="flex-1 bg-white border border-b-0 border-[#666]"></div>
      </section>
    </aside>

    <!-- Attribute table -->
    <section class="flex-1 min-w-0 ml-[5px] pt-[2px] flex flex-col">
      <div class="h-9 shrink-0 flex items-stretch border-b-2 border-[#666]">
        <button class="w-[154px] bg-[#666] text-white text-base flex items-center pl-[19px] pt-[2px]">Region@BM<svg class="w-[10px] h-[10px] ml-4"><use href="#cross" /></svg></button>
        <button class="px-4 pt-[2px] text-[#666]">起始页</button>
        <button class="ml-auto mr-[9px] mb-2" aria-label="窗口列表"><svg class="w-2 h-[5px]" viewBox="0 0 8 5"><path d="M0 0H8L4 5z" fill="#444" /></svg></button>
      </div>
      <div class="flex-1 min-h-0 relative flex border-x border-[#a0a0a0] pt-[2px] overflow-hidden">
        <table class="table-fixed w-[1272px] shrink-0 h-fit border-separate border-spacing-0 text-black text-base leading-5 text-center">
          <colgroup>
            <col class="w-[72px]" /><col class="w-[150px]" /><col class="w-[150px]" /><col class="w-[150px]" /><col class="w-[150px]" /><col class="w-[150px]" /><col class="w-[150px]" /><col class="w-[150px]" /><col class="w-[150px]" />
          </colgroup>
          <thead>
            <tr id="grid-head"></tr>
          </thead>
          <tbody id="grid-body"></tbody>
        </table>
        <div class="ml-auto w-[27px] border-l border-white pt-[26px] pl-[7px]">
          <div class="w-[11px] h-[26px] bg-[#888]"></div>
        </div>
        <!-- Highlight around the material columns -->
        <div class="absolute left-[964px] -top-[2px] w-[307px] h-[1052px] border-[3px] border-[#f93a3a]"></div>
      </div>
    </section>

    <!-- Properties dock -->
    <aside class="w-[333px] shrink-0 ml-[6px] border-l border-t border-[#a0a0a0] flex flex-col overflow-hidden relative">
      <h2 class="h-[60px] flex items-center pl-[18px] pb-[2px] text-[22px] leading-7">属性</h2>
      <ul class="ml-[3px] h-[120px] shrink-0 bg-white border border-r-0 border-[#828790] pt-[2px] pl-1">
        <li class="h-[22px] flex items-center"><svg class="w-[27px] h-6"><use href="#t-minus" /></svg><svg class="w-6 h-[22px]" viewBox="0 0 24 22"><path d="M4 4V1H23V18H20" fill="#e9e9e9" stroke="#7d8896" stroke-width="1.500" /><path d="M3 1H23" stroke="#6fb0e0" stroke-width="2" /><rect x="1" y="4.500" width="19" height="17" fill="#fff" stroke="#7fbfc4" stroke-width="1.500" /><path d="M1 6H20" stroke="#7fc4cf" stroke-width="3" /><path d="M4 11H8M10 11H13M15 11H18M4 15H8M10 15H13M15 15H18M4 19H8M10 19H13M15 19H18" stroke="#6fb0e0" stroke-width="1.800" /></svg><span class="pl-[5px] text-base">BM</span></li>
        <li class="h-[22px] flex items-center"><span class="w-[27px]"></span><svg class="w-[27px] h-6"><use href="#t-corner" /></svg><svg class="w-[18px] h-[18px] ml-[2px]"><use href="#region" /></svg><span class="ml-[6px] px-[2px] leading-[22px] bg-[#efefef] text-black text-base">Region</span></li>
      </ul>
      <nav class="ml-[3px] h-12 shrink-0 border-b border-[#a0a0a0] flex items-center pl-[11px] gap-6 whitespace-nowrap">
        <button>数据集</button>
        <button>坐标系</button>
        <button>矢量</button>
        <button class="relative h-12">属性表<svg class="absolute left-[19px] -bottom-px w-[14px] h-2" viewBox="0 0 14 8"><path d="M0 8L7 1L14 8" fill="#efefef" stroke="#a0a0a0" /></svg></button>
        <button>值域</button>
      </nav>
      <div class="ml-4 mt-3 h-[47px] shrink-0 bg-white rounded-l flex items-center">
        <span class="ml-[3px] h-[38px] border-l-2 border-dotted border-[#b0b0b0]"></span>
        <button class="ml-[7px]" aria-label="添加"><svg class="w-[22px] h-[22px]" viewBox="0 0 22 22"><path d="M0 11H22M11 0V22" stroke="#3a73b5" stroke-width="3" /></svg></button>
        <button class="ml-[6px]" aria-label="插入"><svg class="w-[23px] h-[23px]" viewBox="0 0 23 23" fill="none"><path d="M1 1H13V22H1z" stroke="#7d8896" stroke-width="2" /><path d="M7 1V22M1 6H13M1 17H13" stroke="#a9b1bd" /><path d="M7 8H23V15H7z" fill="#fff" /><path d="M12 9H22V14H12z" fill="#e3eefa" stroke="#3a73b5" stroke-width="1.500" /><path d="M12 11.500H8M7 11.500L10 9V14z" stroke="#3a73b5" fill="#3a73b5" /></svg></button>
        <button class="ml-[5px]" aria-label="重命名"><svg class="w-[22px] h-[22px]" viewBox="0 0 22 22" fill="none"><path d="M12 6H1V16H12M18 6H21V16H18" stroke="#8c8c8c" stroke-width="2" /><path d="M4 8.500H10V13.500H4z" fill="#666" /><path d="M15 2V20M11 1Q15 1 15 3Q15 1 19 1M11 21Q15 21 15 19Q15 21 19 21" stroke="#4b8cc8" stroke-width="1.800" /></svg></button>
        <button class="ml-[9px]" aria-label="上移"><svg class="w-4 h-[17px]" viewBox="0 0 16 17"><path d="M8 0L16 9H10.500V17H5.500V9H0z" fill="#4b8cc8" /></svg></button>
        <button class="ml-3" aria-label="下移"><svg class="w-4 h-[17px]" viewBox="0 0 16 17"><path d="M8 17L16 8H10.500V0H5.500V8H0z" fill="#4b8cc8" /></svg></button>
        <button class="ml-2" aria-label="删除"><svg class="w-[22px] h-[22px]" viewBox="0 0 22 22" fill="none" stroke="#b5b5b5" stroke-width="2"><path d="M0 4H22M7 4V1H15V4M3 4V21H19V4M8 8V18M11 8V18M14 8V18" /></svg></button>
        <button class="ml-[7px]" aria-label="关联"><svg class="w-[22px] h-[22px]" viewBox="0 0 22 22" fill="none" stroke-width="2.200" stroke-linecap="round"><path d="M10 7L13.500 3.500Q16.500 1 19 3.500T18.500 9L15 12.500Q12.500 14 10.500 12.500" stroke="#4fc0a4" /><path d="M12 15L8.500 18.500Q5.500 21 3 18.500T3.500 13L7 9.500Q9.500 8 11.500 9.500" stroke="#62b4e2" /></svg></button>
        <span class="w-px h-[38px] bg-[#b0b0b0] ml-[6px]"></span>
        <button class="ml-[7px] flex items-center gap-[5px] text-[#777] whitespace-nowrap" disabled><svg class="w-5 h-4" viewBox="0 0 20 16"><path d="M1 8L7 14L19 2" fill="none" stroke="#b0b0b0" stroke-width="3" /></svg>应用</button>
      </div>
      <div class="ml-4 mt-[6px] flex-1 bg-white border-l-2 border-t-2 border-[#a0a0a0] overflow-hidden">
        <table class="table-fixed w-[379px] border-separate border-spacing-0 text-black text-base leading-5">
          <colgroup>
            <col class="w-[30px]" /><col class="w-20" /><col class="w-20" /><col class="w-[70px]" /><col class="w-[119px]" />
          </colgroup>
          <thead>
            <tr class="h-[31px] text-left text-[17px]">
              <th class="border-b border-r border-b-[#a0a0a0] border-r-[#dcdcdc]"></th>
              <th class="font-normal pl-2 border-b border-r border-b-[#a0a0a0] border-r-[#dcdcdc]">名称</th>
              <th class="font-normal pl-2 border-b border-r border-b-[#a0a0a0] border-r-[#dcdcdc]">别名</th>
              <th class="font-normal pl-2 border-b border-r border-b-[#a0a0a0] border-r-[#dcdcdc]">类型</th>
              <th class="font-normal pl-2 border-b border-b-[#a0a0a0]">长度</th>
            </tr>
          </thead>
          <tbody id="field-body"></tbody>
        </table>
      </div>
      <div class="absolute right-[15px] bottom-2 text-[11px] leading-4 text-[#8c8c8c] font-['Liberation_Sans',sans-serif]">CSDN @gshh_</div>
    </aside>
  </main>

  <script>
    const columns = ['序号', 'SmID', 'SmUserID', 'SmArea', 'SmPerimeter', 'SmGeometry', 'Height', '侧面材质', '顶面材质'];

    // SmArea, SmPerimeter, Height, material number
    const rows = [
      ['711.581558', '129.986641', 30, 4],
      ['1,121.950731', '166.454788', 36, 5],
      ['544.30244', '97.189621', 36, 5],
      ['134.464421', '46.984426', 6, 1],
      ['994.482939', '128.442039', 30, 4],
      ['1,223.617492', '151.704511', 30, 4],
      ['986.964402', '157.700778', 30, 4],
      ['489.446655', '88.617242', 30, 4],
      ['353.369116', '74.380071', 30, 4],
      ['793.864102', '121.373941', 54, 8],
      ['1,322.579009', '237.90068', 36, 5],
      ['368.948172', '121.401768', 30, 4],
      ['132.305774', '54.692775', 36, 5],
      ['1,324.662675', '177.766755', 30, 4],
      ['715.317143', '120.291894', 36, 5],
      ['572.25266', '88.340055', 66, 10],
      ['525.998201', '92.734612', 54, 8],
      ['397.994048', '81.17351', 48, 7],
      ['432.951132', '96.51035', 36, 5],
      ['832.553582', '159.49912', 36, 5],
      ['870.734975', '120.030702', 30, 4],
      ['89.330895', '40.941379', 30, 4],
      ['552.866138', '117.42244', 30, 4],
      ['454.982629', '107.624246', 30, 4],
      ['698.072669', '111.272382', 30, 4],
      ['438.312592', '86.22013', 30, 4],
      ['401.158128', '92.53791', 30, 4],
      ['552.838598', '98.841542', 42, 6],
      ['453.905962', '96.77892', 30, 4],
      ['1,785.503841', '170.35794', 36, 5]
    ];

    document.getElementById('grid-head').innerHTML = columns.map(name =>
      `<th class="h-[34px] p-0 bg-[#e1e1e1] border-r border-b border-[#bcbcbc] font-normal ${/[a-z]/i.test(name) ? '' : 'text-[17px]'}">${name}</th>`
    ).join('');

    const locked = 'h-[34px] p-0 bg-[#f5f5f5] text-[#747474] border-r border-b border-[#d0d0d0]';
    const open = 'h-[34px] p-0 bg-white border-r border-b border-[#d0d0d0]';
    const marker = '<span class="absolute left-0 top-0 w-[15px] h-[22px] bg-white flex items-center pl-[5px]"><svg class="w-1 h-2" viewBox="0 0 4 8"><path d="M0 0L4 4L0 8z" /></svg></span>';

    document.getElementById('grid-body').innerHTML = rows.map(([area, perimeter, height, mat], i) => `
      <tr>
        <td class="relative h-[34px] p-0 bg-[#e1e1e1] border-r border-b border-[#bcbcbc]">${i === 0 ? marker : ''}${i + 1}</td>
        <td class="${locked} ${i === 0 ? 'outline-2 -outline-offset-2 outline-black' : ''}">${i + 1}</td>
        <td class="${open}">0</td>
        <td class="${locked}">${area}</td>
        <td class="${locked}">${perimeter}</td>
        <td class="${locked}">BinaryData</td>
        <td class="${open}">${height}</td>
        <td class="${open}">CityBuiMat${mat}</td>
        <td class="${open}">TOPMat</td>
      </tr>`).join('');

    // name, alias, type, length, name locked, type locked, length locked
    const fields = [
      ['*SmID', 'SmID', '32位整型', 4, 1, 1, 1],
      ['SmUserID', 'SmUserID', '32位整型', 4, 1, 1, 1],
      ['*SmArea', 'SmArea', '双精度', 8, 1, 1, 1],
      ['*SmPerimeter', 'SmPerimeter', '双精度', 8, 1, 1, 1],
      ['*SmGeometry', 'SmGeometry', '二进制型', 0, 1, 1, 1],
      ['Height', 'Height', '32位整型', 4, 0, 0, 1],
      ['侧面材质', '侧面材质', '文本型', 255, 0, 0, 0],
      ['顶面材质', '顶面材质', '文本型', 255, 0, 0, 0]
    ];

    const cell = 'h-[34px] p-0 pl-1 border-r border-b border-[#a0a0a0] overflow-hidden whitespace-nowrap';
    const shade = on => on ? 'bg-[#efefef]' : 'bg-white';
    const size = text => /[a-z]/i.test(text) ? 'text-base' : 'text-[17px]';

    document.getElementById('field-body').innerHTML = fields.map((f, i) => `
      <tr>
        <td class="h-[34px] p-0 text-center border-r border-b border-[#a0a0a0] ${i === 0 ? 'bg-[#0078d7] text-white' : 'bg-[#efefef]'}">${i + 1}</td>
        <td class="${cell} pr-[6px] text-ellipsis ${size(f[0])} ${shade(f[4])}">${f[0]}</td>
        <td class="${cell} pr-[6px] text-ellipsis bg-white ${size(f[1])}">${f[1]}</td>
        <td class="${cell} ${size(f[2])} ${shade(f[5])}">${f[2]}</td>
        <td class="${cell} ${shade(f[6])}">${f[3]}</td>
      </tr>`).join('');
  </script>
</body>
</html>
